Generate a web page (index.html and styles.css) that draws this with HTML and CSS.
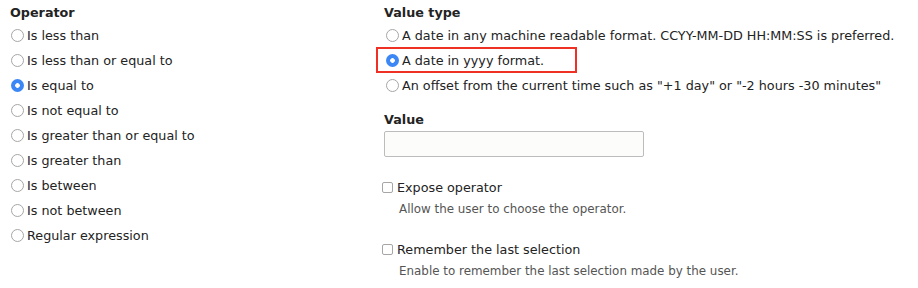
FILE: index.html
```html
<!DOCTYPE html>
<html>
<head>
<meta charset="utf-8">
<link rel="stylesheet" href="styles.css">
</head>
<body>
<div class="form">
  <div class="col col-left">
    <div class="heading">Operator</div>
    <label class="radio-row"><span class="radio"></span><span>Is less than</span></label>
    <label class="radio-row"><span class="radio"></span><span>Is less than or equal to</span></label>
    <label class="radio-row"><span class="radio checked"></span><span>Is equal to</span></label>
    <label class="radio-row"><span class="radio"></span><span>Is not equal to</span></label>
    <label class="radio-row"><span class="radio"></span><span>Is greater than or equal to</span></label>
    <label class="radio-row"><span class="radio"></span><span>Is greater than</span></label>
    <label class="radio-row"><span class="radio"></span><span>Is between</span></label>
    <label class="radio-row"><span class="radio"></span><span>Is not between</span></label>
    <label class="radio-row"><span class="radio"></span><span>Regular expression</span></label>
  </div>
  <div class="col col-right">
    <div class="heading">Value type</div>
    <label class="radio-row"><span class="radio"></span><span>A date in any machine readable format. CCYY-MM-DD HH:MM:SS is preferred.</span></label>
    <label class="radio-row highlighted"><span class="radio checked"></span><span>A date in yyyy format.</span></label>
    <label class="radio-row"><span class="radio"></span><span>An offset from the current time such as "+1 day" or "-2 hours -30 minutes"</span></label>
    <div class="heading value-heading">Value</div>
    <div class="text-input"></div>
    <label class="check-row"><span class="checkbox"></span><span>Expose operator</span></label>
    <div class="description">Allow the user to choose the operator.</div>
    <label class="check-row"><span class="checkbox"></span><span>Remember the last selection</span></label>
    <div class="description">Enable to remember the last selection made by the user.</div>
  </div>
</div>
</body>
</html>
```
FILE: styles.css
```css
html, body {
  margin: 0;
  padding: 0;
  background: #ffffff;
}
body {
  font-family: "DejaVu Sans", Verdana, sans-serif;
  font-size: 12.75px;
  color: #232323;
}
.form {
  display: flex;
  padding-top: 3px;
}
.col-left {
  width: 374px;
  padding-left: 10px;
}
.col-right {
  flex: 1;
}
.heading {
  font-weight: bold;
  line-height: 20px;
  height: 20px;
}
.radio-row {
  display: flex;
  align-items: center;
  height: 25px;
  position: relative;
}
.radio {
  box-sizing: border-box;
  width: 13px;
  height: 13px;
  border: 1px solid #a6a6a6;
  border-radius: 50%;
  background: #fff;
  margin-left: 1px;
  margin-right: 3px;
  flex: none;
}
.col-right .radio {
  margin-left: 2px;
}
.radio.checked {
  border: none;
  background: radial-gradient(circle, #ffffff 0, #ffffff 2px, #3b87f5 2.6px);
}
.highlighted::after {
  content: "";
  position: absolute;
  left: -8px;
  top: -1px;
  box-sizing: border-box;
  width: 201px;
  height: 26px;
  border: 2px solid #ee3124;
}
.value-heading {
  margin-top: 12px;
}
.text-input {
  box-sizing: border-box;
  width: 260px;
  height: 26px;
  margin-top: 1px;
  border: 1px solid #bcbcbc;
  border-radius: 2px;
  background: #fcfcfa;
}
.check-row {
  display: flex;
  align-items: center;
  height: 20px;
  margin-top: 20px;
}
.checkbox {
  box-sizing: border-box;
  width: 11px;
  height: 11px;
  border: 1px solid #a6a6a6;
  border-radius: 2px;
  background: #fff;
  margin-left: -2px;
  margin-right: 4px;
  flex: none;
}
.description {
  margin-top: 2px;
  padding-left: 15px;
  line-height: 20px;
  color: #555555;
  font-size: 11.9px;
}
```
